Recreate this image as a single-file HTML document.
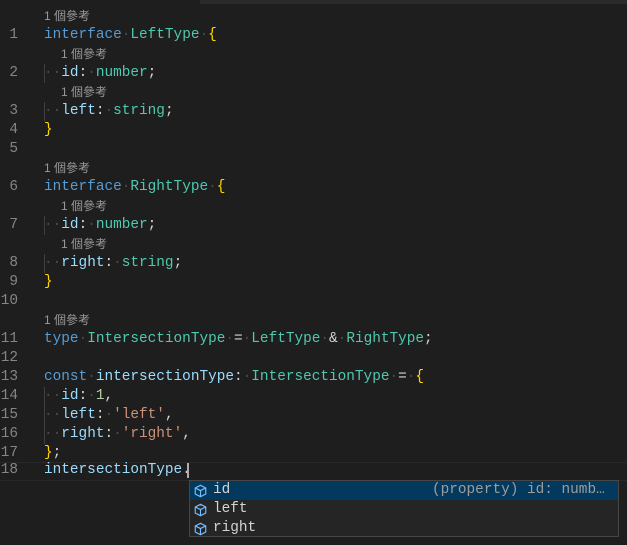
<!DOCTYPE html>
<html><head><style>
html,body{margin:0;width:627px;height:545px;overflow:hidden}
body{background:#1e1e1e;position:relative;font-family:"Liberation Mono",monospace;}
.r{position:absolute;left:0;height:19px;line-height:19px;font-size:14.4px;white-space:pre;width:627px}
.n{position:absolute;left:0;width:18px;text-align:right;color:#858585}
.c{position:absolute;left:44px}
.cl{font-family:"Liberation Sans","Noto Sans CJK TC",sans-serif;font-size:12px;color:#999}
.k{color:#569cd6}.t{color:#4ec9b0}.p{color:#9cdcfe}.w{color:#d4d4d4}.s{color:#ce9178}.m{color:#b5cea8}.b{color:#ffd700}.d{color:#4a4a4a}
.g{position:absolute;left:44px;width:1px;background:#404040}
.sg{position:absolute;left:189px;top:480px;width:428px;height:55px;background:#252526;border:1px solid #454545}
.it{position:absolute;left:0;width:428px;height:19px;line-height:19px;font-size:14.4px;color:#d4d4d4}
.it svg{position:absolute;left:3px;top:3px}
.it span{position:absolute;left:23px}
#w{position:absolute;left:0;top:2px;width:627px;height:478px}
</style></head><body>
<div style="position:absolute;left:200px;top:0;width:427px;height:4px;background:#2a2a2a"></div>
<div style="position:absolute;left:0;top:462px;width:627px;height:17px;border-top:1px solid #282828;border-bottom:1px solid #282828"></div>
<div id="w">
<div class="g" style="top:62px;height:19px"></div><div class="g" style="top:100px;height:19px"></div>
<div class="g" style="top:214px;height:19px"></div><div class="g" style="top:252px;height:19px"></div>
<div class="g" style="top:385px;height:57px"></div>

<div class="r" style="top:5px"><span class="c cl">1 個參考</span></div>
<div class="r" style="top:24px"><span class="n">1</span><span class="c"><span class="k">interface</span><span class="d">·</span><span class="t">LeftType</span><span class="d">·</span><span class="b">{</span></span></div>
<div class="r" style="top:43px"><span class="c cl" style="left:61px">1 個參考</span></div>
<div class="r" style="top:62px"><span class="n">2</span><span class="c"><span class="d">··</span><span class="p">id</span><span class="w">:</span><span class="d">·</span><span class="t">number</span><span class="w">;</span></span></div>
<div class="r" style="top:81px"><span class="c cl" style="left:61px">1 個參考</span></div>
<div class="r" style="top:100px"><span class="n">3</span><span class="c"><span class="d">··</span><span class="p">left</span><span class="w">:</span><span class="d">·</span><span class="t">string</span><span class="w">;</span></span></div>
<div class="r" style="top:119px"><span class="n">4</span><span class="c"><span class="b">}</span></span></div>
<div class="r" style="top:138px"><span class="n">5</span></div>
<div class="r" style="top:157px"><span class="c cl">1 個參考</span></div>
<div class="r" style="top:176px"><span class="n">6</span><span class="c"><span class="k">interface</span><span class="d">·</span><span class="t">RightType</span><span class="d">·</span><span class="b">{</span></span></div>
<div class="r" style="top:195px"><span class="c cl" style="left:61px">1 個參考</span></div>
<div class="r" style="top:214px"><span class="n">7</span><span class="c"><span class="d">··</span><span class="p">id</span><span class="w">:</span><span class="d">·</span><span class="t">number</span><span class="w">;</span></span></div>
<div class="r" style="top:233px"><span class="c cl" style="left:61px">1 個參考</span></div>
<div class="r" style="top:252px"><span class="n">8</span><span class="c"><span class="d">··</span><span class="p">right</span><span class="w">:</span><span class="d">·</span><span class="t">string</span><span class="w">;</span></span></div>
<div class="r" style="top:271px"><span class="n">9</span><span class="c"><span class="b">}</span></span></div>
<div class="r" style="top:290px"><span class="n">10</span></div>
<div class="r" style="top:309px"><span class="c cl">1 個參考</span></div>
<div class="r" style="top:328px"><span class="n">11</span><span class="c"><span class="k">type</span><span class="d">·</span><span class="t">IntersectionType</span><span class="d">·</span><span class="w">=</span><span class="d">·</span><span class="t">LeftType</span><span class="d">·</span><span class="w">&amp;</span><span class="d">·</span><span class="t">RightType</span><span class="w">;</span></span></div>
<div class="r" style="top:347px"><span class="n">12</span></div>
<div class="r" style="top:366px"><span class="n">13</span><span class="c"><span class="k">const</span><span class="d">·</span><span class="p">intersectionType</span><span class="w">:</span><span class="d">·</span><span class="t">IntersectionType</span><span class="d">·</span><span class="w">=</span><span class="d">·</span><span class="b">{</span></span></div>
<div class="r" style="top:385px"><span class="n">14</span><span class="c"><span class="d">··</span><span class="p">id</span><span class="w">:</span><span class="d">·</span><span class="m">1</span><span class="w">,</span></span></div>
<div class="r" style="top:404px"><span class="n">15</span><span class="c"><span class="d">··</span><span class="p">left</span><span class="w">:</span><span class="d">·</span><span class="s">'left'</span><span class="w">,</span></span></div>
<div class="r" style="top:423px"><span class="n">16</span><span class="c"><span class="d">··</span><span class="p">right</span><span class="w">:</span><span class="d">·</span><span class="s">'right'</span><span class="w">,</span></span></div>
<div class="r" style="top:442px"><span class="n">17</span><span class="c"><span class="b">}</span><span class="w">;</span></span></div>
<div class="r" style="top:459px;height:19px"><span class="n">18</span><span class="c"><span class="p">intersectionType</span><span class="w">.</span></span></div>
<div style="position:absolute;left:187px;top:461px;width:2px;height:15px;background:#aeafad"></div>
</div>

<div class="sg">
<div class="it" style="top:0;background:#04395e"><svg width="15" height="14" viewBox="0 0 16 16"><path d="M8 1.5L14 4.5V11.5L8 14.5L2 11.5V4.5Z M2 4.5L8 7.5L14 4.5 M8 7.5V14.5" fill="none" stroke="#75beff" stroke-width="1.3"/></svg><span>id</span><span style="left:242px;color:#9d9d9d">(property) id: numb…</span></div>
<div class="it" style="top:19px"><svg width="15" height="14" viewBox="0 0 16 16"><path d="M8 1.5L14 4.5V11.5L8 14.5L2 11.5V4.5Z M2 4.5L8 7.5L14 4.5 M8 7.5V14.5" fill="none" stroke="#75beff" stroke-width="1.3"/></svg><span>left</span></div>
<div class="it" style="top:38px"><svg width="15" height="14" viewBox="0 0 16 16"><path d="M8 1.5L14 4.5V11.5L8 14.5L2 11.5V4.5Z M2 4.5L8 7.5L14 4.5 M8 7.5V14.5" fill="none" stroke="#75beff" stroke-width="1.3"/></svg><span>right</span></div>
</div>
</body></html>
